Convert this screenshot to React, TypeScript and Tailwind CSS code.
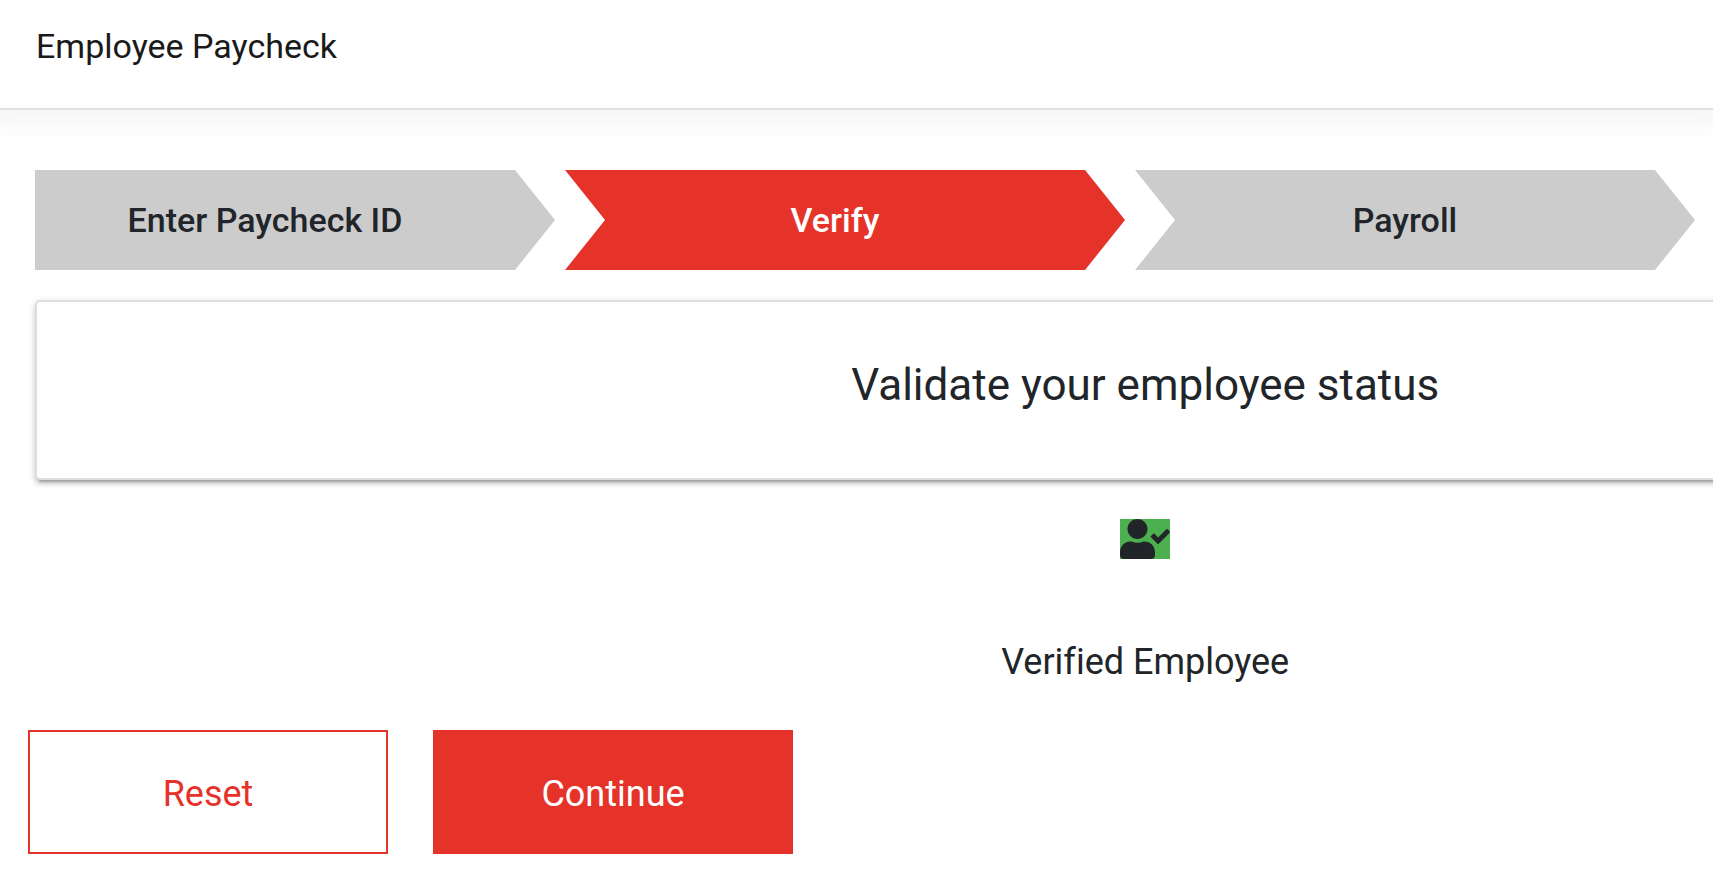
import { FaUserCheck } from "react-icons/fa"

const steps = [
  { label: "Enter Paycheck ID", active: false },
  { label: "Verify", active: true },
  { label: "Payroll", active: false },
]

// Arrow shapes: the first step has a flat left edge
const firstShape =
  "flex-[13_1_0%] [clip-path:polygon(0_0,calc(100%-40px)_0,100%_50%,calc(100%-40px)_100%,0_100%)]"
const nextShape =
  "flex-[14_1_0%] [clip-path:polygon(0_0,calc(100%-40px)_0,100%_50%,calc(100%-40px)_100%,0_100%,40px_50%)]"

function Header() {
  return (
    <header className="border-b-2 border-[#dee2e6] bg-white px-9 pt-5 pb-9 shadow-[0_4px_24px_12px_rgba(0,0,0,0.04)]">
      <h1 className="text-[34px] leading-[52px] text-[#1a1a1a]">Employee Paycheck</h1>
    </header>
  )
}

function Steps() {
  return (
    <ol className="flex gap-[10px] pr-[18px] pl-[35px]">
      {steps.map((step, i) => (
        <li
          key={step.label}
          aria-current={step.active ? "step" : undefined}
          className={`flex h-[100px] items-center justify-center text-[34px] leading-[50px] font-medium ${
            i === 0 ? firstShape : nextShape
          } ${step.active ? "bg-[#e6332a] text-white" : "bg-[#cccccc] text-[#212529]"}`}
        >
          <span className={i === 0 ? "pr-[60px]" : "pr-5"}>{step.label}</span>
        </li>
      ))}
    </ol>
  )
}

export default function App() {
  return (
    <div className="overflow-x-hidden bg-white font-[Roboto,sans-serif] text-[#212529] [font-variant-ligatures:none]">
      <Header />

      <main className="pt-[60px] pb-8">
        <Steps />

        {/* Content is wider than the window and runs off its right side */}
        <div className="w-[134%] pt-[30px] pr-10 pl-[35px]">
          <section className="rounded-[5px] border-2 border-[#dedede] bg-white pt-[50px] pb-[60px] text-center shadow-[0_6px_2px_-4px_rgba(0,0,0,0.2),0_4px_4px_rgba(0,0,0,0.14),0_2px_10px_rgba(0,0,0,0.12)]">
            <h2 className="text-[44px] leading-[66px]">Validate your employee status</h2>
          </section>

          <div className="flex flex-col items-center pt-[39px]">
            <FaUserCheck className="h-10 w-[50px] bg-[#4caf50]" aria-hidden="true" />
            <p className="mt-[75px] text-[36px] leading-[56px]">Verified Employee</p>
          </div>
        </div>

        <div className="flex gap-[45px] px-7 pt-10">
          <button
            type="button"
            className="h-[124px] w-[360px] border-2 border-[#e6332a] bg-white pt-1 text-[36px] leading-[56px] text-[#e6332a]"
          >
            Reset
          </button>
          <button
            type="button"
            className="h-[124px] w-[360px] border-2 border-[#e6332a] bg-[#e6332a] pt-1 text-[36px] leading-[56px] text-white"
          >
            Continue
          </button>
        </div>
      </main>
    </div>
  )
}
